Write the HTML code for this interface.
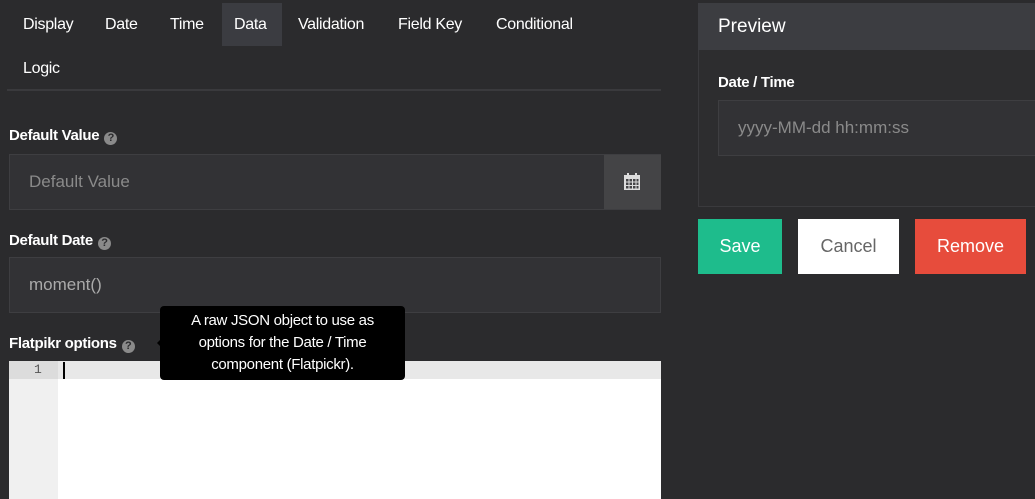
<!DOCTYPE html>
<html><head><style>
body{margin:0;width:1035px;height:499px;background:#2b2b2d;font-family:"Liberation Sans",sans-serif;position:relative;overflow:hidden;color:#fff}
.a{position:absolute}
.tab{position:absolute;font-size:16px;color:#fff;top:16px;letter-spacing:-0.3px}
.lbl{position:absolute;font-size:15px;font-weight:bold;color:#fff;letter-spacing:-0.3px}
.q{display:inline-block;width:13px;height:13px;border-radius:50%;background:#8a8a8a;color:#2b2b2d;font-size:11px;text-align:center;line-height:13px;vertical-align:-1px;margin-left:5px}
.inp{position:absolute;background:#323235;border:1px solid #3e3e41;box-sizing:border-box;font-size:17px;color:#8a8a8a;padding-left:19px}
.btn{position:absolute;top:219px;height:55px;line-height:55px;text-align:center;font-size:18px;box-sizing:border-box}
</style></head><body>
<div class="a" style="left:222px;top:3px;width:60px;height:43px;background:#3b3c41"></div>
<div class="tab" style="left:23px">Display</div>
<div class="tab" style="left:105px">Date</div>
<div class="tab" style="left:170px">Time</div>
<div class="tab" style="left:234px">Data</div>
<div class="tab" style="left:298px">Validation</div>
<div class="tab" style="left:398px">Field Key</div>
<div class="tab" style="left:496px">Conditional</div>
<div class="tab" style="left:23px;top:60px">Logic</div>
<div class="a" style="left:7px;top:89px;width:654px;height:2px;background:#3a3a3d"></div>

<div class="lbl" style="left:9px;top:127px">Default Value<span class="q">?</span></div>
<div class="inp" style="left:9px;top:154px;width:652px;height:56px;line-height:54px">Default Value</div>
<div class="a" style="left:604px;top:155px;width:57px;height:54px;background:#444446">
<svg class="a" style="left:20px;top:18px" width="16" height="17" viewBox="0 0 16 17"><rect x="3" y="0" width="2" height="4" fill="#ddd"/><rect x="11" y="0" width="2" height="4" fill="#ddd"/><rect x="0" y="2" width="16" height="15" fill="#ddd"/><g fill="#444446"><rect x="2" y="6" width="2.5" height="2.5"/><rect x="5.5" y="6" width="2.5" height="2.5"/><rect x="9" y="6" width="2.5" height="2.5"/><rect x="12.5" y="6" width="2" height="2.5"/><rect x="2" y="9.5" width="2.5" height="2.5"/><rect x="5.5" y="9.5" width="2.5" height="2.5"/><rect x="9" y="9.5" width="2.5" height="2.5"/><rect x="12.5" y="9.5" width="2" height="2.5"/><rect x="2" y="13" width="2.5" height="2.5"/><rect x="5.5" y="13" width="2.5" height="2.5"/><rect x="9" y="13" width="2.5" height="2.5"/><rect x="12.5" y="13" width="2" height="2.5"/></g></svg>
</div>

<div class="lbl" style="left:9px;top:232px">Default Date<span class="q">?</span></div>
<div class="inp" style="left:9px;top:257px;width:652px;height:56px;line-height:54px;color:#aaa">moment()</div>

<div class="lbl" style="left:9px;top:335px">Flatpikr options<span class="q">?</span></div>
<div class="a" style="left:9px;top:361px;width:652px;height:138px;background:#fff"></div>
<div class="a" style="left:9px;top:361px;width:49px;height:138px;background:#f0f0f0"></div>
<div class="a" style="left:9px;top:361px;width:652px;height:18px;background:#e8e8e8"></div>
<div class="a" style="left:9px;top:361px;width:49px;height:18px;background:#dcdcdc"></div>
<div class="a" style="left:34px;top:362px;font-family:'Liberation Mono',monospace;font-size:13px;color:#555">1</div>
<div class="a" style="left:63px;top:362px;width:2px;height:17px;background:#000"></div>

<div class="a" style="left:153px;top:339px;width:0;height:0;border:4px solid transparent;border-right-color:#000"></div>
<div class="a" style="left:160px;top:306px;width:245px;height:74px;background:#000;border-radius:4px;font-size:15px;line-height:22px;text-align:center;padding-top:4px;box-sizing:border-box;letter-spacing:-0.3px">A raw JSON object to use as<br>options for the Date / Time<br>component (Flatpickr).</div>

<div class="a" style="left:698px;top:3px;width:340px;height:204px;background:#2d2d2f;border:1px solid #3a3a3d;box-sizing:border-box"></div>
<div class="a" style="left:698px;top:3px;width:340px;height:47px;background:#3c3d41"></div>
<div class="a" style="left:718px;top:16px;font-size:19px;color:#fff">Preview</div>
<div class="lbl" style="left:718px;top:74px">Date / Time</div>
<div class="inp" style="left:718px;top:100px;width:330px;height:56px;line-height:54px">yyyy-MM-dd hh:mm:ss</div>

<div class="btn" style="left:698px;width:84px;background:#1ebc8c;color:#fff">Save</div>
<div class="btn" style="left:798px;width:101px;background:#fff;color:#666">Cancel</div>
<div class="btn" style="left:915px;width:111px;background:#e74c3c;color:#fff">Remove</div>
</body></html>
